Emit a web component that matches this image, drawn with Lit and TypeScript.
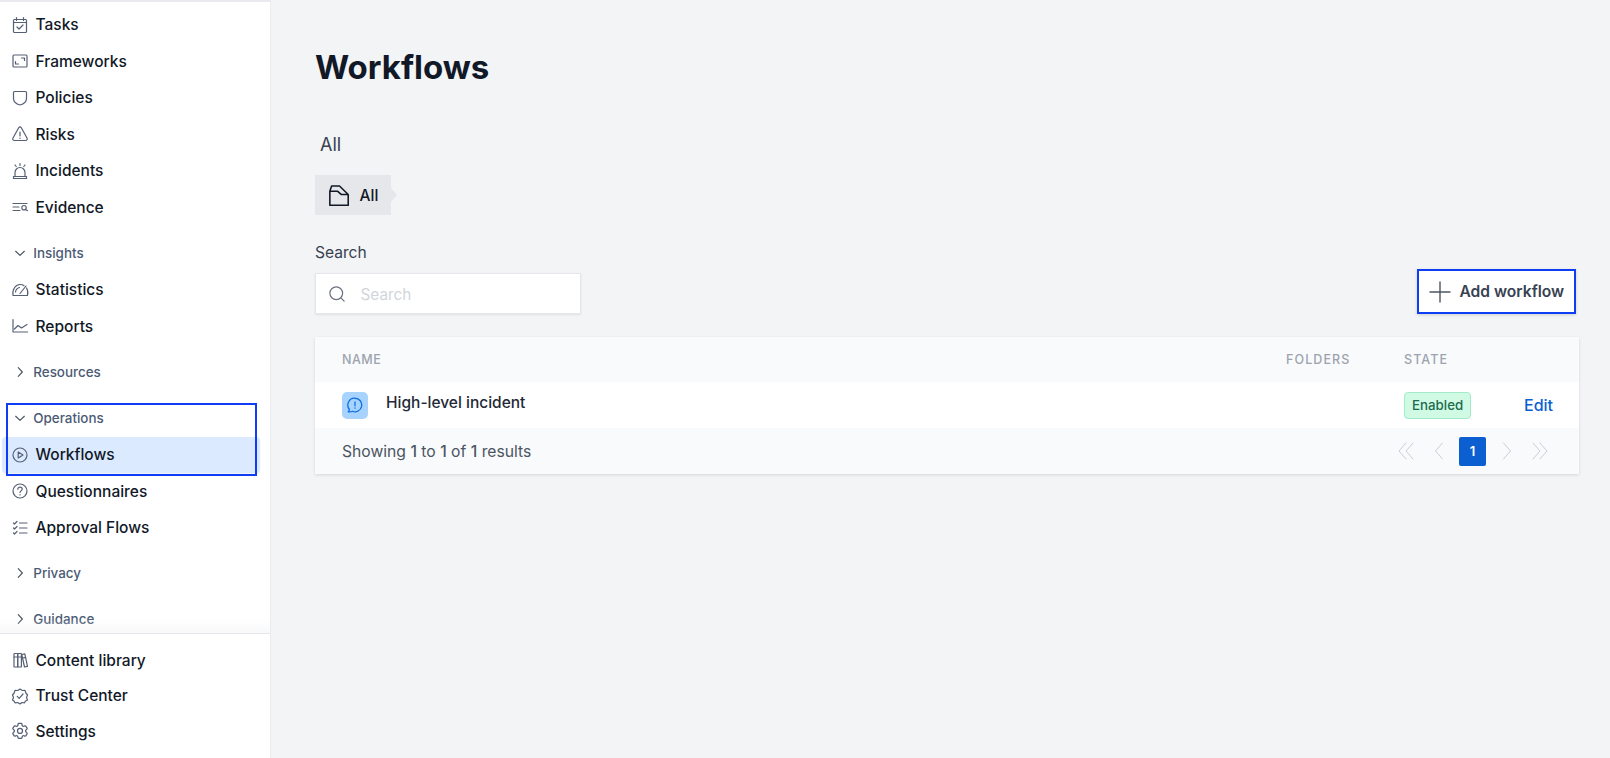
import { LitElement, html, css, svg } from "lit";
import { customElement } from "lit/decorators.js";

const icons: Record<string, unknown> = {
  tasks: svg`<rect x="3.500" y="4.500" width="13" height="13" rx="1"/><path d="M6.500 2.500v3M13.500 2.500v3M3.500 7.500h13M7 12l2 2 4-4"/>`,
  frameworks: svg`<rect x="3" y="4" width="14" height="12" rx="1"/><path d="M11.500 7h3v2.500M8.500 13h-3v-2.500"/>`,
  policies: svg`<path d="M4.500 3.500h11a1 1 0 0 1 1 1v6c0 3.500-3 5.500-6.500 6.500-3.500-1-6.500-3-6.500-6.500v-6a1 1 0 0 1 1-1z"/>`,
  risks: svg`<path d="M8.700 3.700 3 14c-.7 1.300.1 2.500 1.300 2.500h11.400c1.200 0 2-1.200 1.300-2.500L11.300 3.700c-.6-1-2-1-2.600 0z"/><path d="M10 8v4M10 14.200v.2"/>`,
  incidents: svg`<path d="M5 15v-3.500a5 5 0 0 1 10 0V15M3.500 15.500h13v2h-13zM10 2.500v2M5 4l1.200 1.500M15 4l-1.200 1.500"/>`,
  evidence: svg`<path d="M3 6.500h14M3 10h6M3 13.500h7"/><circle cx="14" cy="10.700" r="2.200"/><path d="m15.700 12.400 1.800 1.300"/>`,
  statistics: svg`<path d="M3 15c-1-6 3-10.500 7-10.500 1.500 0 3 .4 4 1.200M16.500 8c1.300 2 1.600 5 1 7.200M3 15.500h14.500M10 13.500l6-7.500M5.500 12c.3-2.300 2-4 4-4.500"/>`,
  reports: svg`<path d="M3 3.500V16h14.500M4.500 13l3.500-3.500 3.500 2.500 5.500-3.500"/>`,
  workflows: svg`<circle cx="10" cy="10" r="7"/><path d="M8.200 7v6l4.800-3z"/>`,
  questionnaires: svg`<circle cx="10" cy="10" r="7"/><path d="M7.800 8.200c0-1.200 1-2 2.200-2s2.200.8 2.200 2c0 1.600-2.200 1.700-2.200 3.300M10 13.700v.2"/>`,
  approval: svg`<path d="M9.500 5H17M9.500 10H17M9.500 15H17M3.500 5l1 1 2.500-2.500M3.500 10l1 1L7 8.500M3.500 15l1 1 2.500-2.500"/>`,
  library: svg`<rect x="4" y="3.500" width="3.700" height="13.500" rx=".6"/><rect x="7.700" y="3.500" width="3.700" height="13.500" rx=".6"/><path d="m11.800 4.500 3-.7 2.700 12.500-3 .7zM4 7h7.400M12.600 8l3.200-.7"/>`,
  trust: svg`<path d="m7.200 10.300 2 2 3.800-4.300M10 3l2.300 1.500 2.700-.1.800 2.600L17.500 9l-1 2.500 1 2.500-2.200 1.300-.8 1.500-2.500-.3L10 18l-2.300-1.500-2.700.3-.8-1.500L2.500 14l1-2.500-1-2.500 1.700-2 .8-2.600 2.700.1z"/>`,
  settings: svg`<g transform="scale(.8333)" stroke-width="1.500"><path d="M9.594 3.940c.09-.542.56-.94 1.110-.94h2.593c.55 0 1.020.398 1.110.94l.213 1.281c.063.374.313.686.645.87.074.04.147.083.22.127.325.196.72.257 1.075.124l1.217-.456a1.125 1.125 0 0 1 1.370.49l1.296 2.247a1.125 1.125 0 0 1-.26 1.431l-1.003.827c-.293.241-.438.613-.43.992a7.723 7.723 0 0 1 0 .255c-.008.378.137.75.43.991l1.004.827c.424.35.534.955.26 1.430l-1.298 2.247a1.125 1.125 0 0 1-1.369.491l-1.217-.456c-.355-.133-.75-.072-1.076.124a6.470 6.470 0 0 1-.22.128c-.331.183-.581.495-.644.869l-.213 1.281c-.09.543-.56.94-1.110.94h-2.594c-.55 0-1.019-.398-1.110-.94l-.213-1.281c-.062-.374-.312-.686-.644-.87a6.520 6.520 0 0 1-.22-.127c-.325-.196-.72-.257-1.076-.124l-1.217.456a1.125 1.125 0 0 1-1.369-.49l-1.297-2.247a1.125 1.125 0 0 1 .26-1.431l1.004-.827c.292-.24.437-.613.43-.991a6.932 6.932 0 0 1 0-.255c.007-.38-.138-.751-.43-.992l-1.004-.827a1.125 1.125 0 0 1-.26-1.430l1.297-2.247a1.125 1.125 0 0 1 1.370-.491l1.216.456c.356.133.751.072 1.076-.124.072-.044.146-.086.22-.128.332-.183.582-.495.644-.869l.214-1.280Z"/><circle cx="12" cy="12" r="3"/></g>`,
};

const icon = (name: string) =>
  html`<svg class="ico" viewBox="0 0 20 20" fill="none" stroke="currentColor" stroke-width="1.200" stroke-linecap="round" stroke-linejoin="round">${icons[name]}</svg>`;

const chev = (down: boolean) =>
  html`<svg class="chev" viewBox="0 0 12 12" fill="none" stroke="currentColor" stroke-width="1" stroke-linecap="round" stroke-linejoin="round">
    ${down ? svg`<path d="M2.300 4.500 6 8l3.700-3.500"/>` : svg`<path d="M4.500 2.300 8 6 4.500 9.700"/>`}
  </svg>`;

@customElement("app-root")
export class AppRoot extends LitElement {
  static styles = css`
    :host {
      display: flex;
      width: 1610px;
      height: 758px;
      overflow: hidden;
      background: #f3f4f6;
      font-family: Inter, "Liberation Sans", sans-serif;
      color: #111827;
    }
    .side {
      flex: 0 0 271px;
      width: 271px;
      box-sizing: border-box;
      height: 758px;
      background: #fff;
      border-right: 1px solid #e9ebef;
      border-top: 2px solid #e8eaf0;
      display: flex;
      flex-direction: column;
    }
    .nav {
      height: 631px;
      overflow: hidden;
      padding-top: 4.5px;
      box-sizing: border-box;
      position: relative;
      flex: none;
    }
    .nav::after {
      content: "";
      position: absolute;
      left: 0;
      right: 0;
      bottom: 0;
      height: 14px;
      background: linear-gradient(rgba(243, 244, 246, 0), rgba(243, 244, 246, 0.6));
    }
    .item {
      height: 36.5px;
      display: flex;
      align-items: center;
      padding-left: 10px;
      gap: 5.5px;
      font-size: 15.5px;
      font-weight: 500;
      color: #111827;
      white-space: nowrap;
    }
    .ico {
      width: 20px;
      height: 20px;
      flex: none;
      color: #566074;
    }
    .head {
      height: 38px;
      margin-top: 8px;
      display: flex;
      align-items: center;
      padding-left: 13px;
      gap: 6.3px;
      font-size: 13.4px;
      font-weight: 500;
      color: #4b5b75;
    }
    .chev {
      width: 14px;
      height: 14px;
      color: #4b5563;
      flex: none;
    }
    .ops {
      position: relative;
    }
    .ops::after {
      content: "";
      position: absolute;
      left: 6px;
      top: 4px;
      width: 251px;
      height: 73px;
      box-sizing: border-box;
      border: 2px solid #0f3cf5;
    }
    .active {
      background: #dbeafe;
      margin: 0 10px 0 2px;
      padding-left: 8px;
      border-radius: 4px;
      box-shadow: 0 1px 2px rgba(0, 0, 0, 0.06);
    }
    .bottom {
      flex: 1;
      border-top: 1px solid #e5e7eb;
      padding-top: 8.5px;
    }
    .bottom .item {
      height: 35.5px;
    }
    .main {
      flex: 1;
      min-width: 0;
      padding: 47px 31px 0 44px;
      box-sizing: border-box;
    }
    h1 {
      margin: 0;
      font-size: 33px;
      line-height: 40px;
      font-weight: 700;
      color: #111827;
    }
    .crumbs-title {
      margin: 46px 0 0 5px;
      font-size: 18px;
      line-height: 24px;
      color: #374151;
    }
    .crumb {
      margin-top: 18px;
      width: 76px;
      height: 40px;
      background: #e5e7eb;
      display: flex;
      align-items: center;
      padding-left: 14px;
      box-sizing: border-box;
      gap: 9.5px;
      font-size: 15.5px;
      font-weight: 500;
      position: relative;
    }
    .crumb::after {
      content: "";
      position: absolute;
      left: 100%;
      top: 13px;
      border-left: 6px solid #e5e7eb;
      border-top: 7px solid transparent;
      border-bottom: 7px solid transparent;
    }
    .crumb svg {
      width: 21px;
      height: 21px;
      color: #111827;
      flex: none;
    }
    .tools {
      margin-top: 26px;
      display: flex;
      justify-content: space-between;
      align-items: flex-end;
      padding-right: 3px;
    }
    .label {
      font-size: 15.6px;
      line-height: 24px;
      color: #374151;
      margin-bottom: 8px;
    }
    .search {
      width: 266px;
      height: 41px;
      box-sizing: border-box;
      background: #fff;
      border: 1px solid #e5e7eb;
      box-shadow: 0 1px 2px rgba(0, 0, 0, 0.08);
      display: flex;
      align-items: center;
      padding: 1px 0 0 12px;
      gap: 14.5px;
      font-size: 15.3px;
      color: #d1d5db;
    }
    .search svg {
      width: 18px;
      height: 18px;
      color: #6b7280;
    }
    .add {
      width: 159px;
      height: 45px;
      box-sizing: border-box;
      background: #fff;
      border: 2px solid #0f3cf5;
      box-shadow: 0 1px 3px rgba(0, 0, 0, 0.15);
      display: flex;
      align-items: center;
      padding-left: 10px;
      gap: 8.5px;
      font-size: 15.6px;
      font-weight: 600;
      color: #374151;
      white-space: nowrap;
    }
    .add svg {
      width: 22px;
      height: 22px;
      color: #4b5563;
      flex: none;
    }
    .table {
      margin-top: 23px;
      box-shadow: 0 1px 3px rgba(0, 0, 0, 0.12);
    }
    .row {
      display: grid;
      grid-template-columns: 1fr 118px 120px 55px;
      align-items: center;
      padding-left: 27px;
    }
    .thead {
      height: 45px;
      background: #f9fafb;
      font-size: 12.5px;
      letter-spacing: 1.1px;
      color: #9ca3af;
      font-weight: 500;
    }
    .tight {
      letter-spacing: 0.5px;
    }
    .tbody {
      height: 46px;
      background: #fff;
    }
    .name {
      display: flex;
      align-items: center;
      gap: 18px;
      font-size: 15.5px;
      font-weight: 500;
      color: #1f2937;
    }
    .name-text {
      padding-bottom: 6px;
    }
    .badge-ico {
      width: 26px;
      height: 27px;
      border-radius: 5px;
      background: #a9d3ff;
      display: flex;
      align-items: center;
      justify-content: center;
      color: #0b6fe0;
    }
    .badge-ico svg {
      width: 18px;
      height: 18px;
    }
    .pill {
      display: inline-block;
      justify-self: start;
      height: 27px;
      line-height: 24px;
      box-sizing: border-box;
      padding: 0 7px;
      background: #d1fae5;
      border: 1px solid #a2ebc9;
      border-radius: 4px;
      color: #1c6b4e;
      font-size: 13.3px;
      font-weight: 500;
    }
    .edit {
      color: #0b5fd1;
      font-size: 16px;
      font-weight: 500;
    }
    .foot {
      height: 46px;
      background: #f9fafb;
      display: flex;
      align-items: center;
      justify-content: space-between;
      padding: 0 27px;
      font-size: 15.7px;
      color: #4b5563;
    }
    .foot b {
      font-weight: 500;
    }
    .pages {
      display: flex;
      align-items: center;
      color: #c9ced6;
      margin-right: -4px;
    }
    .pages svg {
      width: 18px;
      height: 18px;
    }
    .pg {
      width: 33px;
      display: flex;
      justify-content: center;
    }
    .cur {
      width: 27px;
      height: 29px;
      background: #0b5fd1;
      color: #fff;
      border-radius: 2px;
      font-size: 13px;
      font-weight: 600;
      display: flex;
      align-items: center;
      justify-content: center;
      margin: 0 4px;
    }
  `;

  private item(name: string, label: string, active = false) {
    return html`<div class="item ${active ? "active" : ""}">${icon(name)}<span>${label}</span></div>`;
  }
  private head(label: string, open: boolean) {
    return html`<div class="head">${chev(open)}<span>${label}</span></div>`;
  }
  private pageIcon(d: string) {
    return html`<span class="pg"><svg viewBox="0 0 18 18" fill="none" stroke="currentColor" stroke-width="1" stroke-linecap="round" stroke-linejoin="round"><path d="${d}"/></svg></span>`;
  }

  render() {
    return html`
      <aside class="side">
        <div class="nav">
          ${this.item("tasks", "Tasks")} ${this.item("frameworks", "Frameworks")}
          ${this.item("policies", "Policies")} ${this.item("risks", "Risks")}
          ${this.item("incidents", "Incidents")} ${this.item("evidence", "Evidence")}
          ${this.head("Insights", true)} ${this.item("statistics", "Statistics")}
          ${this.item("reports", "Reports")} ${this.head("Resources", false)}
          <div class="ops">
            ${this.head("Operations", true)} ${this.item("workflows", "Workflows", true)}
          </div>
          ${this.item("questionnaires", "Questionnaires")} ${this.item("approval", "Approval Flows")}
          ${this.head("Privacy", false)} ${this.head("Guidance", false)}
        </div>
        <div class="bottom">
          ${this.item("library", "Content library")} ${this.item("trust", "Trust Center")}
          ${this.item("settings", "Settings")}
        </div>
      </aside>
      <main class="main">
        <h1>Workflows</h1>
        <div class="crumbs-title">All</div>
        <div class="crumb">
          <svg viewBox="0 0 20 20" fill="none" stroke="currentColor" stroke-width="1.500" stroke-linejoin="round"><path d="M.8 6V19.300h17.500V9l-8.300-8H2.500L.8 6h7.500l3.300 3h6.700"/></svg>
          <span>All</span>
        </div>
        <div class="tools">
          <div>
            <div class="label">Search</div>
            <div class="search">
              <svg viewBox="0 0 24 24" fill="none" stroke="currentColor" stroke-width="1.600" stroke-linecap="round"><circle cx="11" cy="11" r="8.500"/><path d="m17.500 17.500 4 4"/></svg>
              <span>Search</span>
            </div>
          </div>
          <div class="add">
            <svg viewBox="0 0 22 22" fill="none" stroke="currentColor" stroke-width="1.400" stroke-linecap="round"><path d="M11 1v20M1 11h20"/></svg>
            <span>Add workflow</span>
          </div>
        </div>
        <div class="table">
          <div class="row thead"><span class="tight">NAME</span><span>FOLDERS</span><span>STATE</span><span></span></div>
          <div class="row tbody">
            <div class="name">
              <span class="badge-ico"><svg viewBox="0 0 24 24" fill="none" stroke="currentColor" stroke-width="1.700" stroke-linecap="round" stroke-linejoin="round"><path d="M12 3a9 9 0 1 1-3.500 17.300c-1 .6-3 1-5.500.7 1-1 1.500-2 1.500-3.300A9 9 0 0 1 12 3z"/><path d="M12 8v5M12 16v.3"/></svg></span>
              <span class="name-text">High-level incident</span>
            </div>
            <span></span>
            <span class="pill">Enabled</span>
            <span class="edit">Edit</span>
          </div>
          <div class="foot">
            <span>Showing <b>1</b> to <b>1</b> of <b>1</b> results</span>
            <div class="pages">
              ${this.pageIcon("M9 1 2 9l7 8M16 1 9 9l7 8")}
              ${this.pageIcon("M12.500 1 5.500 9l7 8")}
              <span class="cur">1</span>
              ${this.pageIcon("M5.500 1l7 8-7 8")}
              ${this.pageIcon("M2 1l7 8-7 8M9 1l7 8-7 8")}
            </div>
          </div>
        </div>
      </main>
    `;
  }
}
